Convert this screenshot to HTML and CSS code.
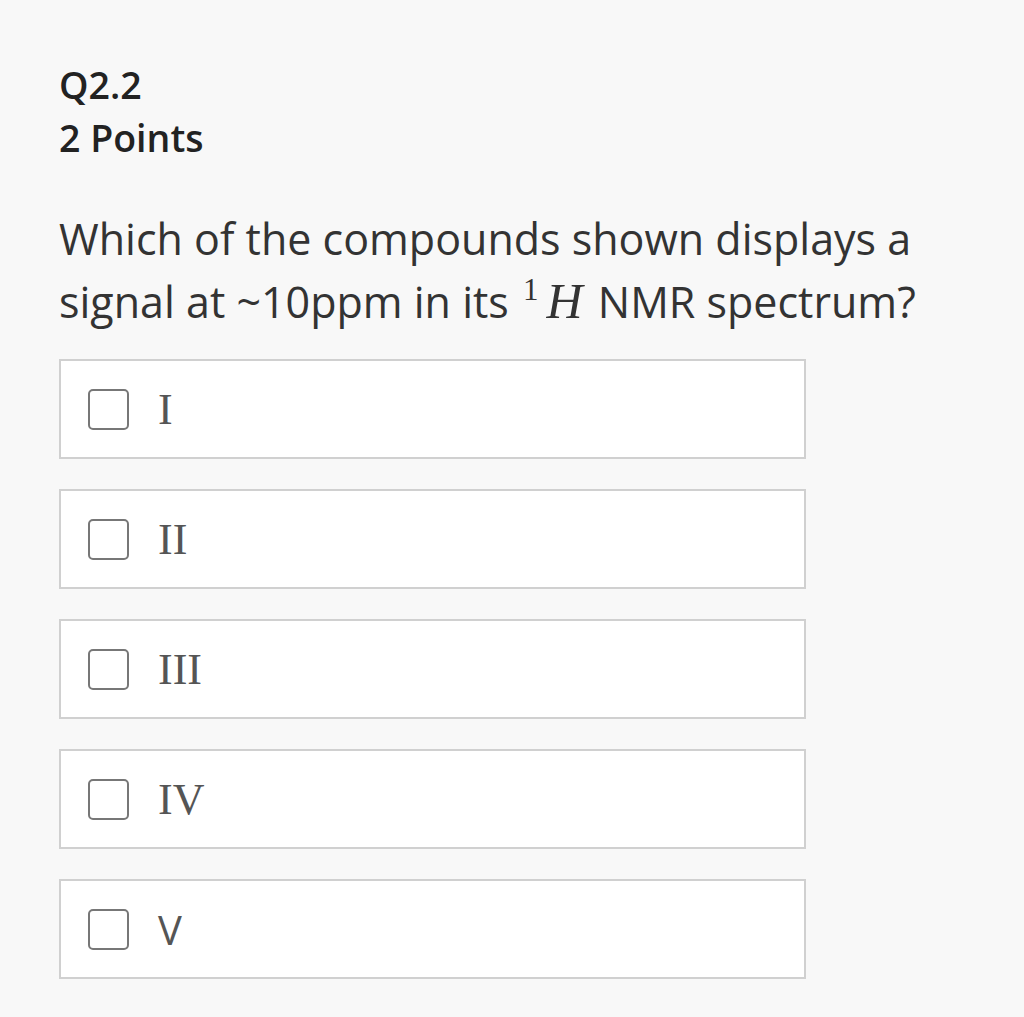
FILE: index.html
```html
<!DOCTYPE html>
<html lang="en">
<head>
    <meta charset="UTF-8">
    <meta name="viewport" content="width=device-width, initial-scale=1.0">
    <title>Q2.2</title>
    <link rel="stylesheet" href="styles.css">
</head>
<body>

    <div class="question">
        <div class="question-title">
            <div>Q2.2</div>
            <div>2 Points</div>
        </div>

        <p class="prompt">
            Which of the compounds shown displays a signal at ~10ppm in its <span class="math"><sup>1</sup><i>H</i></span> NMR spectrum?
        </p>

        <div class="options">
            <label class="option">
                <span class="checkbox"></span>
                <span class="option-label math">I</span>
            </label>
            <label class="option">
                <span class="checkbox"></span>
                <span class="option-label math">II</span>
            </label>
            <label class="option">
                <span class="checkbox"></span>
                <span class="option-label math">III</span>
            </label>
            <label class="option">
                <span class="checkbox"></span>
                <span class="option-label math">IV</span>
            </label>
            <label class="option">
                <span class="checkbox"></span>
                <span class="option-label">V</span>
            </label>
        </div>
    </div>

</body>
</html>
```

FILE: styles.css
```css
/* General styles */
body {
    font-family: "Open Sans", Arial, sans-serif;
    background-color: #f8f8f8;
    color: #333;
    margin: 0;
    padding: 0;
}

.question {
    padding: 58px 0 0 59px;
    width: 747px;
}

.question-title {
    font-size: 37.5px;
    line-height: 53px;
    font-weight: 600;
    color: #222;
}

.prompt {
    margin: 43px 0 26px;
    font-size: 43px;
    line-height: 63px;
    width: 900px;
}

.math {
    font-family: "Liberation Serif", "Times New Roman", serif;
}

.prompt .math {
    line-height: 0;
    margin-left: 3px;
}

.math sup {
    font-size: 31px;
    line-height: 0;
    vertical-align: 18px;
    margin-right: 8px;
}

.math i {
    font-size: 50px;
    margin-right: 4px;
}

/* Answer options */
.options {
    display: flex;
    flex-direction: column;
    gap: 30px;
}

.option {
    display: flex;
    align-items: center;
    height: 96px;
    padding: 0 27px;
    background-color: #fff;
    border: 2px solid #d0d0d0;
}

.checkbox {
    width: 37px;
    height: 37px;
    border: 2px solid #777;
    border-radius: 5px;
    margin-right: 29px;
}

.option-label {
    font-size: 40px;
    color: #555;
}

.option-label.math {
    font-size: 44px;
}
```
